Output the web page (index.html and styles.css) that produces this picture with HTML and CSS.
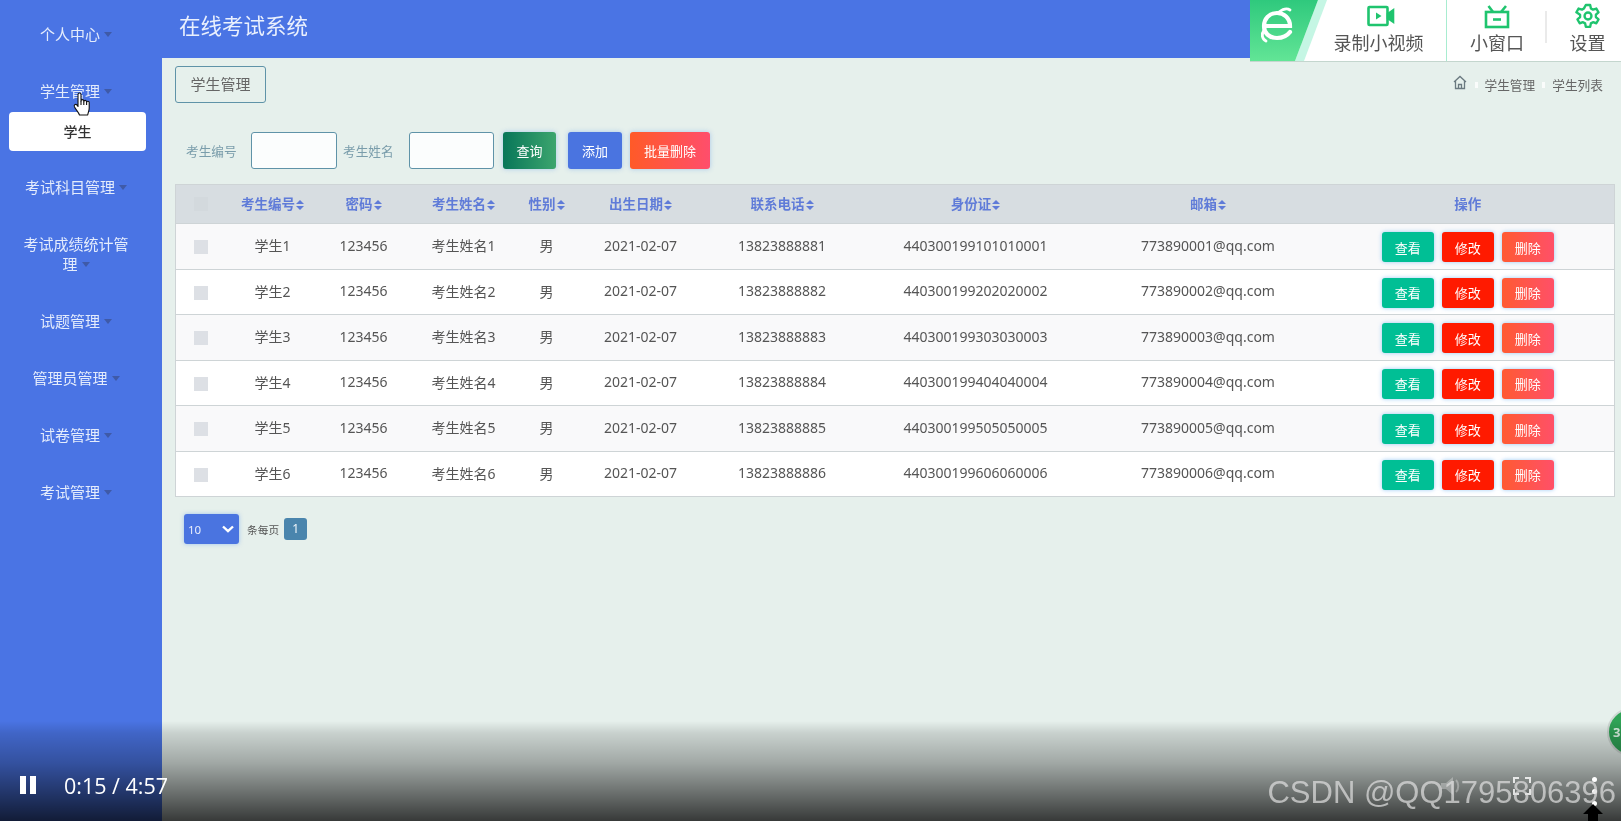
FILE: index.html
```html
<!DOCTYPE html>
<html lang="zh-CN">
<head>
    <meta charset="UTF-8">
    <title>在线考试系统</title>
    <link rel="stylesheet" href="styles.css">
</head>
<body>

<div class="app">
    <aside class="sidebar">
        <div class="nav-item">个人中心<span class="caret"></span></div>
        <div class="nav-item">学生管理<span class="caret"></span></div>
        <div class="nav-sub">学生</div>
        <div class="nav-item">考试科目管理<span class="caret"></span></div>
        <div class="nav-item">考试成绩统计管理<span class="caret"></span></div>
        <div class="nav-item">试题管理<span class="caret"></span></div>
        <div class="nav-item">管理员管理<span class="caret"></span></div>
        <div class="nav-item">试卷管理<span class="caret"></span></div>
        <div class="nav-item">考试管理<span class="caret"></span></div>
    </aside>

    <main class="main">
        <header class="topbar">在线考试系统</header>

        <div class="content">
            <div class="title-row">
                <div class="page-tab">学生管理</div>
                <div class="crumbs">
                    <svg class="home" width="14" height="15" viewBox="0 0 14 15" fill="none" stroke="#6b7a80" stroke-width="1.3">
                        <path d="M1 7 7 1.500 13 7"/>
                        <path d="M2.500 6v7.500h9V6"/>
                        <path d="M5.500 13.500V9.500h3v4"/>
                    </svg>
                    <span class="crumb-sep"></span>
                    <span>学生管理</span>
                    <span class="crumb-sep"></span>
                    <span>学生列表</span>
                </div>
            </div>

            <form class="search-row">
                <label class="search-label">考生编号</label>
                <input class="search-input" type="text">
                <label class="search-label">考生姓名</label>
                <input class="search-input second" type="text">
                <button type="button" class="btn btn-query">查询</button>
                <button type="button" class="btn btn-add">添加</button>
                <button type="button" class="btn btn-batch">批量删除</button>
            </form>

            <table class="data-table">
                <colgroup>
                    <col class="c-check"><col class="c-no"><col class="c-pwd"><col class="c-name"><col class="c-sex">
                    <col class="c-date"><col class="c-tel"><col class="c-id"><col class="c-mail"><col class="c-ops">
                </colgroup>
                <thead>
                    <tr>
                        <th><span class="check head"></span></th>
                        <th>考生编号<span class="sort"></span></th>
                        <th>密码<span class="sort"></span></th>
                        <th>考生姓名<span class="sort"></span></th>
                        <th>性别<span class="sort"></span></th>
                        <th>出生日期<span class="sort"></span></th>
                        <th>联系电话<span class="sort"></span></th>
                        <th>身份证<span class="sort"></span></th>
                        <th>邮箱<span class="sort"></span></th>
                        <th>操作</th>
                    </tr>
                </thead>
                <tbody>
                    <tr>
                        <td><span class="check"></span></td><td>学生1</td><td>123456</td><td>考生姓名1</td><td>男</td>
                        <td>2021-02-07</td><td>13823888881</td><td>440300199101010001</td><td>773890001@qq.com</td>
                        <td><div class="ops"><button class="op op-view">查看</button><button class="op op-edit">修改</button><button class="op op-del">删除</button></div></td>
                    </tr>
                    <tr>
                        <td><span class="check"></span></td><td>学生2</td><td>123456</td><td>考生姓名2</td><td>男</td>
                        <td>2021-02-07</td><td>13823888882</td><td>440300199202020002</td><td>773890002@qq.com</td>
                        <td><div class="ops"><button class="op op-view">查看</button><button class="op op-edit">修改</button><button class="op op-del">删除</button></div></td>
                    </tr>
                    <tr>
                        <td><span class="check"></span></td><td>学生3</td><td>123456</td><td>考生姓名3</td><td>男</td>
                        <td>2021-02-07</td><td>13823888883</td><td>440300199303030003</td><td>773890003@qq.com</td>
                        <td><div class="ops"><button class="op op-view">查看</button><button class="op op-edit">修改</button><button class="op op-del">删除</button></div></td>
                    </tr>
                    <tr>
                        <td><span class="check"></span></td><td>学生4</td><td>123456</td><td>考生姓名4</td><td>男</td>
                        <td>2021-02-07</td><td>13823888884</td><td>440300199404040004</td><td>773890004@qq.com</td>
                        <td><div class="ops"><button class="op op-view">查看</button><button class="op op-edit">修改</button><button class="op op-del">删除</button></div></td>
                    </tr>
                    <tr>
                        <td><span class="check"></span></td><td>学生5</td><td>123456</td><td>考生姓名5</td><td>男</td>
                        <td>2021-02-07</td><td>13823888885</td><td>440300199505050005</td><td>773890005@qq.com</td>
                        <td><div class="ops"><button class="op op-view">查看</button><button class="op op-edit">修改</button><button class="op op-del">删除</button></div></td>
                    </tr>
                    <tr>
                        <td><span class="check"></span></td><td>学生6</td><td>123456</td><td>考生姓名6</td><td>男</td>
                        <td>2021-02-07</td><td>13823888886</td><td>440300199606060006</td><td>773890006@qq.com</td>
                        <td><div class="ops"><button class="op op-view">查看</button><button class="op op-edit">修改</button><button class="op op-del">删除</button></div></td>
                    </tr>
                </tbody>
            </table>

            <div class="pager">
                <div class="page-size">
                    <span>10</span>
                    <svg width="12" height="8" viewBox="0 0 12 8" fill="none" stroke="#fff" stroke-width="2.400"><path d="M1 1.500 6 6.200 11 1.500"/></svg>
                </div>
                <span class="page-label">条每页</span>
                <span class="page-num">1</span>
            </div>
        </div>
    </main>

    <!-- recorder toolbar sits over the header -->
    <div class="recorder">
        <svg class="recorder-logo" width="77" height="61" viewBox="0 0 77 61" fill="none">
            <defs>
                <linearGradient id="logoBg" x1="0" y1="0" x2="0" y2="1">
                    <stop offset="0" stop-color="#2fc97d"/>
                    <stop offset="1" stop-color="#62e596"/>
                </linearGradient>
            </defs>
            <polygon points="68,0 77,0 54,61 45,61" fill="#c5f6e4"/>
            <polygon points="0,0 68,0 45,61 0,61" fill="url(#logoBg)"/>
            <g stroke="#fff" stroke-width="4.200" stroke-linecap="round">
                <path d="M16 26H40C40 18 34 13 27 13C19 13 14 19 14 26C14 33 19 38 27 38C32 38 37 36 40 32"/>
                <path d="M29 12C33 9 37 8 40 10" stroke-width="2.800"/>
                <path d="M14 30C11 34 12 39 16 41" stroke-width="2.800"/>
            </g>
        </svg>
        <div class="rec-item rec-video">
            <svg width="28" height="24" viewBox="0 0 28 24" fill="none" stroke="#1fc46e" stroke-width="2.600">
                <rect x="1.500" y="3" width="19" height="18" rx="1"/>
                <path d="M21 10l5-3.500v11L21 14z" fill="#1fc46e"/>
                <path d="M9 8.500l5.500 3.500L9 15.500z" fill="#1fc46e" stroke="none"/>
            </svg>
            <span>录制小视频</span>
        </div>
        <div class="rec-item rec-mini">
            <svg width="26" height="24" viewBox="0 0 26 24" fill="none" stroke="#1fc46e" stroke-width="2.600">
                <rect x="2" y="8" width="22" height="15"/>
                <path d="M9 8 4.500 2M17 8l5-6"/>
                <path d="M9 15.500h8"/>
            </svg>
            <span>小窗口</span>
        </div>
        <div class="rec-item rec-set">
            <svg width="26" height="26" viewBox="0 0 24 24" fill="none" stroke="#1fc46e" stroke-width="2.200" stroke-linejoin="round">
                <circle cx="12" cy="12" r="3.200"/>
                <path d="M10 1.800h4l.7 3.200 1.900 1.100 3.100-1 2 3.500-2.400 2.200v2.200l2.400 2.200-2 3.500-3.100-1-1.900 1.100-.7 3.200h-4l-.7-3.200-1.900-1.100-3.100 1-2-3.500 2.400-2.200v-2.200L1.300 8.600l2-3.500 3.100 1 1.900-1.100z"/>
            </svg>
            <span>设置</span>
        </div>
    </div>

    <!-- mouse pointer from the recording -->
    <svg class="hand" width="19" height="24" viewBox="0 0 19 24" fill="#fff" stroke="#111" stroke-width="1.100" stroke-linejoin="round">
        <path d="M5 2.500a1.500 1.500 0 0 1 3 0V9a1.400 1.400 0 0 1 2.800 0v.8a1.400 1.400 0 0 1 2.800 0v.8a1.300 1.300 0 0 1 2.600 0V16c0 3-1 4-1.500 7H6.500C5.500 20 3.500 18.500 1.500 15c-1-2 1-3.500 2.500-2l1 1.500z"/>
        <path d="M8 9v4M10.800 9.800V13M13.600 10.600V13" fill="none"/>
    </svg>

    <div class="float-ball"><span>3</span></div>

    <!-- video player controls over the bottom of the picture -->
    <div class="player">
        <div class="player-left">
            <span class="pause"><i></i><i></i></span>
            <span class="player-time">0:15 / 4:57</span>
        </div>
        <div class="player-icons">
            <svg class="icon-sound" width="22" height="22" viewBox="0 0 22 22" fill="rgba(255,255,255,.3)"><path d="M1 8h5l7-6v18l-7-6H1z"/><path d="M16 5c3 3 3 9 0 12" fill="none" stroke="rgba(255,255,255,.3)" stroke-width="2"/></svg>
            <svg class="icon-full" width="18" height="18" viewBox="0 0 18 18" fill="none" stroke="rgba(255,255,255,.8)" stroke-width="2"><path d="M6 1H1v5M12 1h5v5M6 17H1v-5M12 17h5v-5"/></svg>
            <span class="icon-more"><i></i><i></i><i></i></span>
        </div>
        <div class="watermark">CSDN @QQ1795806396</div>
        <svg class="icon-arrow" width="22" height="17" viewBox="0 0 22 17" fill="#000"><path d="M11 0 21 10H16V17H6V10H1z"/></svg>
    </div>
</div>

</body>
</html>
```

FILE: styles.css
```css
* {
    box-sizing: border-box;
}
html, body {
    margin: 0;
    padding: 0;
    height: 100%;
    overflow: hidden;
}
body {
    font-family: "Noto Sans", "Noto Sans CJK SC", sans-serif;
    font-size: 14px;
    color: #555;
}
/* the reference is a video frame, so everything is slightly soft */
.app {
    position: relative;
    display: flex;
    width: 100%;
    height: 100vh;
    overflow: hidden;
    filter: blur(.4px);
}

/* sidebar */
.sidebar {
    flex: 0 0 162px;
    padding: 6px 8px 0 0;
    background-color: #4a74e4;
}
.nav-item {
    padding: 18px 23px 19px 21px;
    color: #e4ecfc;
    font-size: 15px;
    line-height: 20px;
    text-align: center;
}
.caret {
    display: inline-block;
    margin-left: 4px;
    vertical-align: 3px;
    border-left: 4px solid transparent;
    border-right: 4px solid transparent;
    border-top: 5px solid #3f5aa8;
}
.nav-sub {
    margin: -8px 8px 8px 9px;
    height: 39px;
    line-height: 39px;
    border-radius: 4px;
    background-color: #fff;
    color: #333;
    font-size: 14px;
    font-weight: 500;
    text-align: center;
}

/* main column */
.main {
    flex: 1;
    display: flex;
    flex-direction: column;
    min-width: 0;
}
.topbar {
    height: 58px;
    padding: 9px 0 0 17px;
    background-color: #4a74e4;
    color: #eaf0fd;
    font-size: 21.500px;
    line-height: 34px;
}
.content {
    flex: 1;
    padding: 8px 5px 0 13px;
    background-color: #e6f0ec;
}
.title-row {
    display: flex;
    justify-content: space-between;
    align-items: center;
    height: 37px;
}
.page-tab {
    width: 91px;
    height: 37px;
    line-height: 35px;
    border: 1px solid #5f93a8;
    border-radius: 3px;
    color: #666;
    font-size: 15px;
    text-align: center;
}
.crumbs {
    display: flex;
    align-items: center;
    padding-right: 13px;
    color: #666;
    font-size: 12.700px;
}
.crumbs .home {
    margin: -5px 1px 0 0;
}
.crumb-sep {
    width: 3px;
    height: 6px;
    margin: 0 7px;
    background-color: #fff;
    opacity: .8;
}

/* search row */
.search-row {
    display: flex;
    align-items: center;
    height: 37px;
    margin-top: 29px;
    padding-left: 11px;
}
.search-label {
    width: 51px;
    color: #7a9dab;
    font-size: 12.700px;
    white-space: nowrap;
}
.search-input {
    width: 86px;
    height: 37px;
    margin: 0 6px 0 14px;
    padding: 0 8px;
    border: 1px solid #5f93a8;
    border-radius: 3px;
    background-color: #fbfdfd;
}
.search-input.second {
    width: 85px;
    margin: 0 9px 0 15px;
}
.btn {
    height: 37px;
    margin-right: 12px;
    padding: 0;
    border: none;
    border-radius: 3px;
    color: #fff;
    font-family: inherit;
    font-size: 13px;
    box-shadow: 0 0 5px rgba(90, 150, 230, .45);
}
.btn-query {
    width: 53px;
    background: linear-gradient(90deg, #087659, #3ca56e);
}
.btn-add {
    width: 54px;
    margin-right: 8px;
    background-color: #4a74e0;
}
.btn-batch {
    width: 80px;
    background: linear-gradient(90deg, #ff5a28, #ff4e6c);
}

/* table */
.data-table {
    width: 1439px;
    margin-top: 15px;
    border: 1px solid #ced4d6;
    border-collapse: collapse;
    table-layout: fixed;
    background-color: #fff;
}
.c-check { width: 50px; }
.c-no { width: 94px; }
.c-pwd { width: 88px; }
.c-name { width: 112px; }
.c-sex { width: 54px; }
.c-date { width: 134px; }
.c-tel { width: 149px; }
.c-id { width: 238px; }
.c-mail { width: 227px; }
.c-ops { width: 293px; }
.data-table th {
    height: 39px;
    padding: 0 0 2px;
    background-color: #d7dde1;
    color: #5f7bd8;
    font-size: 13.500px;
    font-weight: 700;
}
.data-table td {
    height: 45.500px;
    padding: 0 0 2px;
    border-top: 1px solid #ced4d6;
    color: #555;
    font-size: 14px;
    text-align: center;
}
.data-table tbody tr:nth-child(odd) td {
    background-color: #f9f9fa;
}
.check {
    display: inline-block;
    width: 14px;
    height: 14px;
    vertical-align: middle;
    background-color: #dde0e5;
}
.check.head {
    background-color: #d3d9dd;
}
.sort {
    position: relative;
    display: inline-block;
    width: 8px;
    height: 10px;
    margin-left: 1px;
    vertical-align: -1px;
}
.sort::before, .sort::after {
    content: "";
    position: absolute;
    left: 0;
    border-left: 4px solid transparent;
    border-right: 4px solid transparent;
}
.sort::before {
    top: 0;
    border-bottom: 4px solid #5f7bd8;
}
.sort::after {
    bottom: 0;
    border-top: 4px solid #5f7bd8;
}
.ops {
    display: flex;
    justify-content: center;
    gap: 8px;
    margin-top: 4px;
}
.op {
    width: 52px;
    height: 30px;
    padding: 0;
    border: none;
    border-radius: 3px;
    color: #fff;
    font-family: inherit;
    font-size: 13px;
    box-shadow: 0 0 4px rgba(90, 170, 240, .6);
}
.op-view {
    background-color: #00bf95;
}
.op-edit {
    background-color: #ff1a00;
}
.op-del {
    background: linear-gradient(90deg, #ff5a32, #ff5068);
}

/* pager */
.pager {
    display: flex;
    align-items: center;
    margin: 17px 0 0 9px;
}
.page-size {
    display: flex;
    justify-content: space-between;
    align-items: center;
    width: 55px;
    height: 30px;
    padding: 0 5px 0 4px;
    border-radius: 3px;
    background-color: #4a74e0;
    color: #e8eefc;
    font-size: 11.500px;
    box-shadow: 0 0 4px rgba(90, 150, 240, .5);
}
.page-label {
    margin-left: 8px;
    color: #555;
    font-size: 10.700px;
}
.page-num {
    width: 23px;
    height: 22px;
    margin-left: 5px;
    line-height: 22px;
    border-radius: 3px;
    background-color: #4a85ad;
    color: #eef5fa;
    font-size: 12px;
    text-align: center;
}

/* recorder toolbar */
.recorder {
    position: absolute;
    top: 0;
    right: 0;
    display: flex;
    width: 371px;
    height: 62px;
    background-color: #fff;
    border-bottom: 1px solid #c4d6ce;
}
.recorder-logo {
    flex: 0 0 77px;
}
.rec-item {
    position: relative;
    display: flex;
    flex-direction: column;
    align-items: center;
    padding-top: 3px;
    color: #555;
    font-size: 18px;
    line-height: 24px;
}
.rec-item svg {
    height: 26px;
    margin-bottom: 2px;
}
.rec-video {
    width: 120px;
    padding-right: 16px;
    border-right: 1px solid #a8ecd0;
}
.rec-video svg {
    margin-left: 4px;
}
.rec-mini {
    width: 100px;
}
.rec-set {
    flex: 1;
    padding-left: 7px;
}
.rec-mini::after {
    content: "";
    position: absolute;
    top: 11px;
    right: 0;
    width: 2px;
    height: 32px;
    background-color: #eaeaea;
}

.hand {
    position: absolute;
    left: 73px;
    top: 92px;
}
.float-ball {
    position: absolute;
    top: 708px;
    left: 1607px;
    width: 48px;
    height: 48px;
    padding-left: 4px;
    line-height: 44px;
    border: 2px solid #cfd8d4;
    border-radius: 50%;
    background-color: #2fa356;
    color: #dff5e6;
    font-size: 13px;
    font-weight: 700;
}

/* video player overlay */
.player {
    position: absolute;
    left: 0;
    right: 0;
    bottom: 0;
    height: 100px;
    background: linear-gradient(180deg, rgba(0, 0, 0, 0) 0, rgba(0, 0, 0, .13) 12%, rgba(0, 0, 0, .3) 42%, rgba(0, 0, 0, .56) 75%, rgba(0, 0, 0, .76) 100%);
}
.player-left {
    display: flex;
    align-items: center;
    height: 18px;
    margin: 55px 0 0 20px;
}
.pause {
    display: flex;
    gap: 4px;
    height: 18px;
}
.pause i {
    width: 6px;
    background-color: #fff;
}
.player-time {
    margin-left: 28px;
    color: #fff;
    font-family: "Open Sans", sans-serif;
    font-size: 21.500px;
    white-space: nowrap;
}
.player-icons {
    position: absolute;
    top: 54px;
    left: 1440px;
    display: flex;
    align-items: flex-start;
}
.icon-full {
    margin: 2px 0 0 51px;
}
.icon-more {
    display: flex;
    flex-direction: column;
    gap: 7px;
    margin: 2px 0 0 61px;
}
.icon-more i {
    width: 5px;
    height: 5px;
    border-radius: 50%;
    background-color: #fff;
}
.watermark {
    position: absolute;
    top: 54px;
    right: 5px;
    color: rgba(222, 222, 222, .72);
    font-family: "Liberation Sans", sans-serif;
    font-size: 31px;
    line-height: 36px;
    white-space: nowrap;
}
.icon-arrow {
    position: absolute;
    right: 17px;
    bottom: 0;
}
```
